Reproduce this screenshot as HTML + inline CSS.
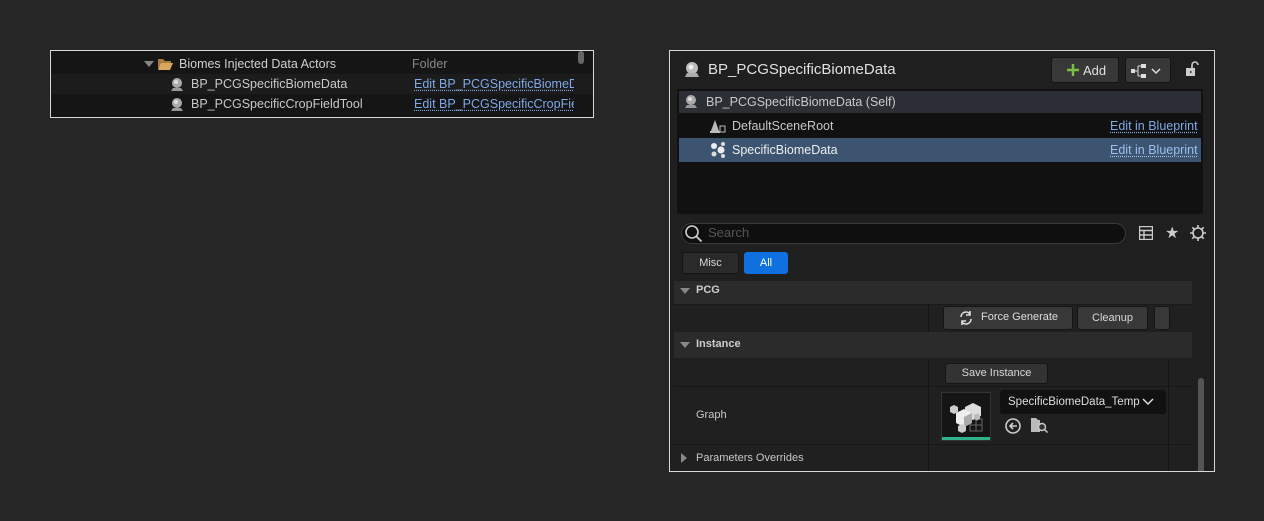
<!DOCTYPE html><html><head><style>
*{margin:0;padding:0;box-sizing:border-box}
body{width:1264px;height:521px;background:#262626;font-family:"Liberation Sans",sans-serif;position:relative;overflow:hidden;color:#c8c8c8}
.a{position:absolute}
.t{position:absolute;font-size:12.5px;white-space:nowrap}
.lk{color:#7fa8e6;text-decoration:underline dotted;text-underline-offset:2px}
.btn{position:absolute;background:#383838;border:1px solid #151515;border-radius:3px;font-size:11px;color:#d8d8d8;text-align:center}
</style></head><body>
<!-- left panel -->
<div class="a" style="left:50px;top:50px;width:544px;height:68px;border:1px solid #d8d8d8;background:#151515;overflow:hidden">
 <div class="a" style="left:0;top:23px;width:542px;height:20px;background:#1c1c1c"></div>
 <div class="a" style="left:527px;top:0;width:6px;height:13px;background:#666;border-radius:3px"></div>
 <div class="a" style="left:93px;top:10px;width:0;height:0;border-left:5px solid transparent;border-right:5px solid transparent;border-top:6px solid #888"></div>
 <svg class="a" style="left:106px;top:6px" width="17" height="14"><path d="M1 2h5l2 2h6v2H5L1 12z" fill="#a87a40"/><path d="M4 6h12l-3 7H1z" fill="#d9a860"/></svg>
 <div class="t" style="left:128px;top:6px;color:#d0d0d0">Biomes Injected Data Actors</div>
 <div class="t" style="left:361px;top:6px;color:#888">Folder</div>
 <svg class="a" style="left:118px;top:25px" width="16" height="16"><circle cx="8" cy="7" r="5" fill="#aaa"/><circle cx="7" cy="6" r="2" fill="#ddd"/><path d="M2 15h12l-2-3H4z" fill="#999"/></svg>
 <div class="t" style="left:140px;top:26px">BP_PCGSpecificBiomeData</div>
 <div class="t lk" style="left:363px;top:26px;width:160px;overflow:hidden">Edit BP_PCGSpecificBiomeData</div>
 <svg class="a" style="left:118px;top:45px" width="16" height="16"><circle cx="8" cy="7" r="5" fill="#aaa"/><circle cx="7" cy="6" r="2" fill="#ddd"/><path d="M2 15h12l-2-3H4z" fill="#999"/></svg>
 <div class="t" style="left:140px;top:46px">BP_PCGSpecificCropFieldTool</div>
 <div class="t lk" style="left:363px;top:46px;width:160px;overflow:hidden">Edit BP_PCGSpecificCropFieldTool</div>
</div>
<!-- right panel -->
<div class="a" style="left:669px;top:50px;width:546px;height:422px;border:1px solid #d8d8d8;background:#1f1f1f;overflow:hidden">
 <svg class="a" style="left:13px;top:9px" width="18" height="18"><circle cx="9" cy="8" r="6" fill="#bbb"/><circle cx="8" cy="7" r="2.5" fill="#eee"/><path d="M2 17h14l-2-4H4z" fill="#aaa"/></svg>
 <div class="t" style="left:38px;top:10px;font-size:15px;color:#e0e0e0">BP_PCGSpecificBiomeData</div>
 <div class="btn" style="left:381px;top:6px;width:68px;height:26px"></div>
 <svg class="a" style="left:396px;top:12px" width="14" height="14"><path d="M7 1v12M1 7h12" stroke="#7ac142" stroke-width="2.4"/></svg>
 <div class="t" style="left:413px;top:12px;color:#e0e0e0;font-size:13px">Add</div>
 <div class="btn" style="left:455px;top:6px;width:46px;height:26px"></div>
 <svg class="a" style="left:460px;top:13px" width="36" height="14"><rect x="1" y="5" width="4" height="4" fill="#ddd"/><path d="M5 7h3M8 2v10M8 2h3M8 12h3" stroke="#ddd"/><rect x="11" y="0" width="5" height="4" fill="#ddd"/><rect x="11" y="10" width="5" height="4" fill="#ddd"/><path d="M22 5l4 4 4-4" stroke="#ddd" stroke-width="1.5" fill="none"/></svg>
 <svg class="a" style="left:514px;top:10px" width="16" height="16"><path d="M8 7V4a3 3 0 0 1 6 0" stroke="#ccc" stroke-width="1.6" fill="none"/><rect x="2" y="7" width="9" height="8" fill="#ccc"/><rect x="6" y="10" width="1.5" height="2" fill="#333"/></svg>
 <div class="a" style="left:7px;top:38px;width:526px;height:125px;background:#111"></div>
 <div class="a" style="left:9px;top:40px;width:522px;height:22px;background:#2b2f35"></div>
 <svg class="a" style="left:13px;top:42px" width="16" height="16"><circle cx="8" cy="7" r="5" fill="#aaa"/><circle cx="7" cy="6" r="2" fill="#ddd"/><path d="M2 15h12l-2-3H4z" fill="#999"/></svg>
 <div class="t" style="left:36px;top:44px">BP_PCGSpecificBiomeData (Self)</div>
 <svg class="a" style="left:40px;top:67px" width="16" height="16"><path d="M5 2l-4 11h8z" fill="#bbb"/><rect x="0" y="13" width="10" height="2" fill="#bbb"/><rect x="10" y="8" width="5" height="6" fill="none" stroke="#bbb"/></svg>
 <div class="t" style="left:62px;top:68px">DefaultSceneRoot</div>
 <div class="t lk" style="left:440px;top:68px">Edit in Blueprint</div>
 <div class="a" style="left:9px;top:87px;width:522px;height:24px;background:#3c5470"></div>
 <svg class="a" style="left:39px;top:90px" width="18" height="18"><circle cx="5" cy="5" r="3" fill="#eee"/><circle cx="12" cy="9" r="3.5" fill="#eee"/><circle cx="5" cy="13" r="2.5" fill="#ddd"/><circle cx="14" cy="3" r="2" fill="#ddd"/><circle cx="14" cy="15" r="2" fill="#ddd"/></svg>
 <div class="t" style="left:62px;top:92px;color:#eee">SpecificBiomeData</div>
 <div class="t lk" style="left:440px;top:92px;color:#9bc0ee">Edit in Blueprint</div>
 <div class="a" style="left:11px;top:172px;width:445px;height:21px;background:#0f0f0f;border:1px solid #3a3a3a;border-radius:11px"></div>
 <svg class="a" style="left:14px;top:173px" width="20" height="20"><circle cx="8" cy="8" r="6" stroke="#ccc" stroke-width="1.6" fill="none"/><path d="M12.5 12.5l5 5" stroke="#ccc" stroke-width="1.8"/></svg>
 <div class="t" style="left:38px;top:174px;font-size:13px;color:#555">Search</div>
 <svg class="a" style="left:469px;top:175px" width="14" height="14"><rect x="0.5" y="0.5" width="13" height="13" fill="none" stroke="#ccc" stroke-width="1.4"/><path d="M0 4.5h14M0 9h14M5 4.5v9" stroke="#ccc" stroke-width="1.4"/></svg>
 <div class="t" style="left:495px;top:172px;font-size:16px;color:#ccc">★</div>
 <svg class="a" style="left:520px;top:174px" width="16" height="16"><circle cx="8" cy="8" r="5" stroke="#ccc" stroke-width="1.6" fill="none"/><path d="M8 0v3M8 13v3M0 8h3M13 8h3M2.3 2.3l2 2M11.7 11.7l2 2M2.3 13.7l2-2M11.7 4.3l2-2" stroke="#ccc" stroke-width="1.6"/></svg>
 <div class="btn" style="left:12px;top:201px;width:57px;height:22px;line-height:20px;background:#2a2a2a">Misc</div>
 <div class="btn" style="left:74px;top:201px;width:44px;height:22px;line-height:20px;background:#0f70e0;color:#fff;border-color:#0f70e0">All</div>
 <div class="a" style="left:4px;top:230px;width:518px;height:23px;background:#2b2b2b"></div>
 <div class="a" style="left:4px;top:253px;width:518px;height:27px;background:#202020;border-top:1px solid #1a1a1a"></div>
 <div class="a" style="left:4px;top:281px;width:518px;height:26px;background:#2b2b2b"></div>
 <div class="a" style="left:4px;top:308px;width:518px;height:162px;background:#202020"></div>
 <div class="a" style="left:4px;top:335px;width:518px;height:1px;background:#161616"></div>
 <div class="a" style="left:4px;top:393px;width:518px;height:1px;background:#161616"></div>
 <div class="a" style="left:258px;top:253px;width:1px;height:28px;background:#161616"></div>
 <div class="a" style="left:258px;top:308px;width:1px;height:120px;background:#161616"></div>
 <div class="a" style="left:498px;top:308px;width:1px;height:120px;background:#161616"></div>
 <div class="a" style="left:528px;top:327px;width:6px;height:95px;background:#555;border-radius:3px"></div>
 <div class="a" style="left:10px;top:237px;border-left:5px solid transparent;border-right:5px solid transparent;border-top:6px solid #888"></div>
 <div class="t" style="left:26px;top:233px;font-size:11px;font-weight:bold;color:#ccc">PCG</div>
 <div class="btn" style="left:273px;top:255px;width:130px;height:24px"></div>
 <svg class="a" style="left:288px;top:259px" width="16" height="16"><path d="M3 7a5 5 0 0 1 9-3M13 9a5 5 0 0 1-9 3" stroke="#ddd" stroke-width="1.6" fill="none"/><path d="M12 1v4H8M4 15v-4h4" stroke="#ddd" stroke-width="1.6" fill="none"/></svg>
 <div class="t" style="left:311px;top:260px;font-size:11px;color:#ddd">Force Generate</div>
 <div class="btn" style="left:407px;top:255px;width:71px;height:24px;line-height:22px">Cleanup</div>
 <div class="btn" style="left:484px;top:255px;width:16px;height:24px"></div>
 <div class="a" style="left:10px;top:291px;border-left:5px solid transparent;border-right:5px solid transparent;border-top:6px solid #888"></div>
 <div class="t" style="left:26px;top:287px;font-size:11px;font-weight:bold;color:#ccc">Instance</div>
 <div class="btn" style="left:275px;top:312px;width:103px;height:21px;line-height:19px;background:#333">Save Instance</div>
 <div class="t" style="left:26px;top:358px;font-size:11px">Graph</div>
 <div class="a" style="left:271px;top:341px;width:50px;height:49px;background:#151515;border:1px solid #333"></div>
 <div class="a" style="left:272px;top:386px;width:48px;height:3px;background:#2fb38a"></div>
 <svg class="a" style="left:276px;top:344px" width="40" height="40"><rect x="24" y="24" width="12" height="12" fill="none" stroke="#666"/><path d="M30 24v12M24 30h12" stroke="#666"/><path d="M19 12l8-4 8 4v9l-8 4-8-4z" fill="#ddd"/><path d="M10 18l8-4 8 4v10l-8 4-8-4z" fill="#eee"/><path d="M18 22v10l8-4V18z" fill="#aaa"/><path d="M4 12l4-2 4 2v5l-4 2-4-2z" fill="#ccc"/><path d="M12 31l4-2 4 2v5l-4 2-4-2z" fill="#ccc"/><path d="M28 20l3-1.5 3 1.5v4l-3 1.5-3-1.5z" fill="#bbb"/></svg>
 <div class="a" style="left:330px;top:339px;width:166px;height:24px;background:#111;border-radius:3px"></div>
 <div class="t" style="left:338px;top:345px;font-size:11.5px;color:#ddd">SpecificBiomeData_Temp</div>
 <svg class="a" style="left:472px;top:347px" width="12" height="8"><path d="M1 1l5 5 5-5" stroke="#ddd" stroke-width="1.5" fill="none"/></svg>
 <svg class="a" style="left:334px;top:366px" width="18" height="18"><circle cx="9" cy="9" r="7" stroke="#ccc" stroke-width="1.6" fill="none"/><path d="M13 9H6M9 6L6 9l3 3" stroke="#ccc" stroke-width="1.6" fill="none"/></svg>
 <svg class="a" style="left:360px;top:365px" width="18" height="18"><path d="M1 2h5l2 2h2v12H1z" fill="#bbb"/><circle cx="12" cy="11" r="3.5" stroke="#ccc" stroke-width="1.4" fill="#333"/><path d="M14.5 13.5l3 3" stroke="#ccc" stroke-width="1.5"/></svg>
 <div class="a" style="left:11px;top:402px;border-top:5px solid transparent;border-bottom:5px solid transparent;border-left:6px solid #888"></div>
 <div class="t" style="left:26px;top:401px;font-size:11px">Parameters Overrides</div>
</div>
</body></html>
